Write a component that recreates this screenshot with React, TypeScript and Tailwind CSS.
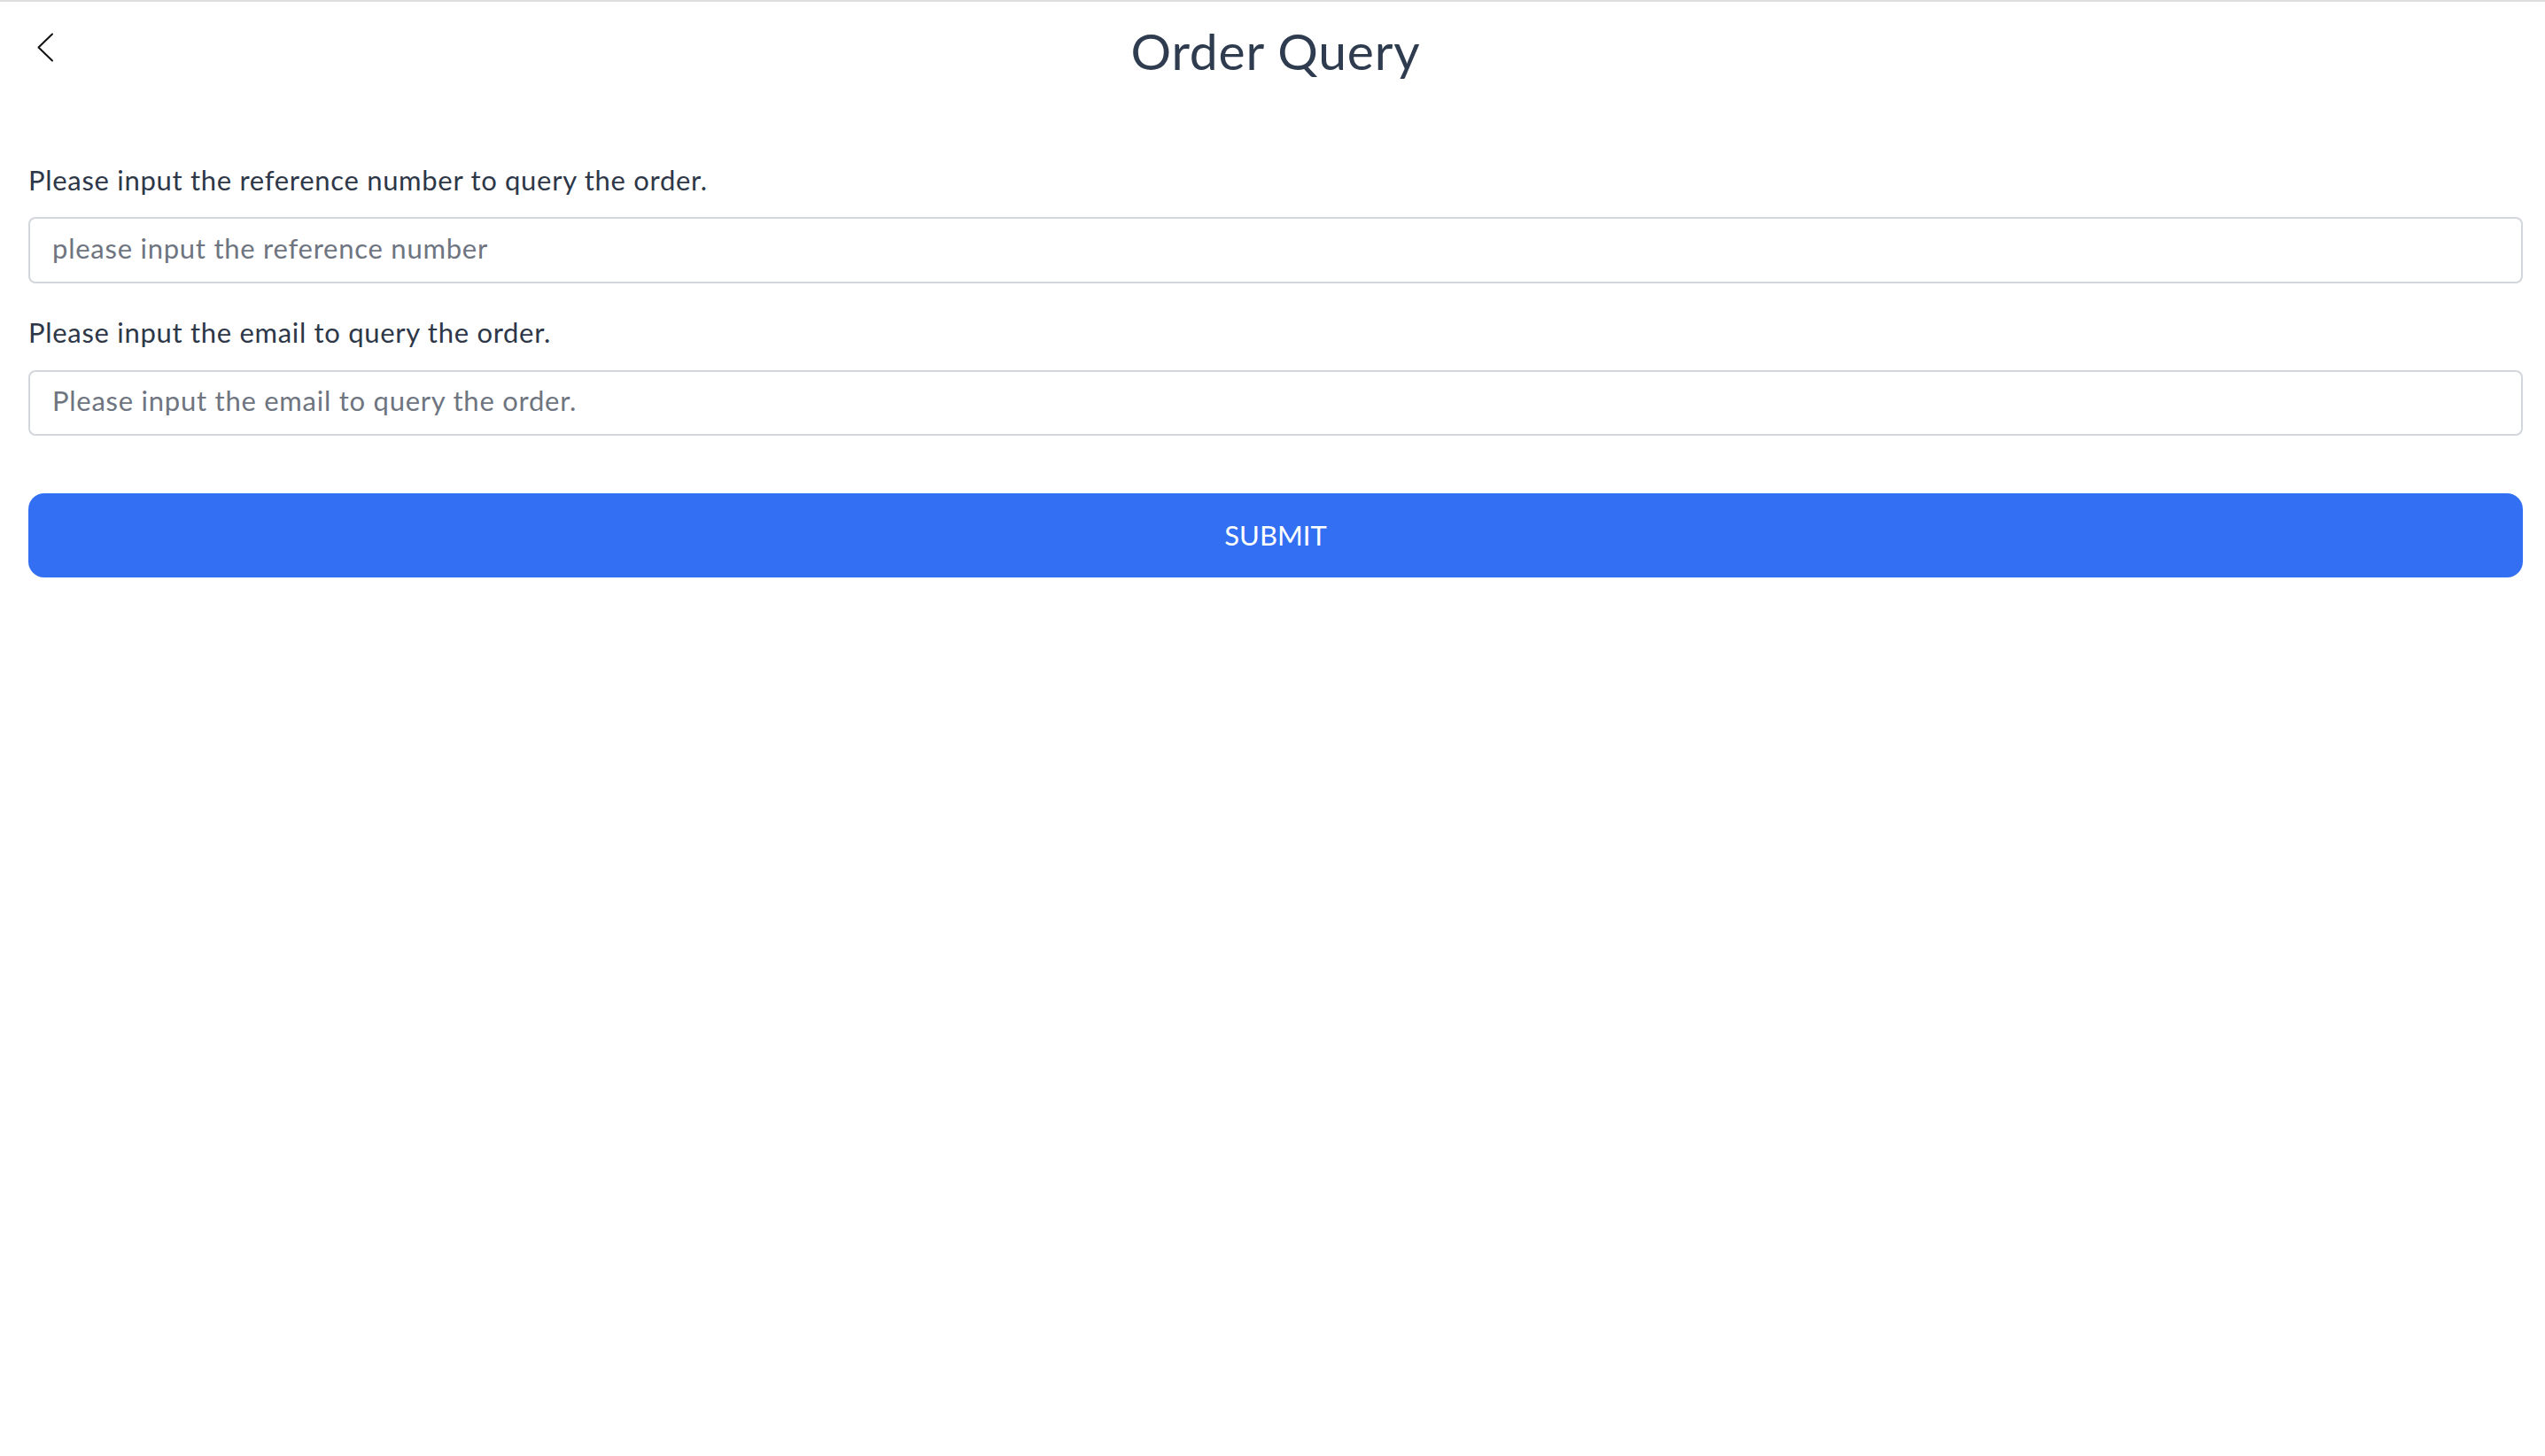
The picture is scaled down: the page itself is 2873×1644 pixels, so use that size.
import React from "react";

export default function App() {
  return (
    <div
      className="min-h-screen bg-white border-t-2 border-[#dedede]"
      style={{ fontFamily: "Lato, 'Open Sans', sans-serif" }}
    >
      <div className="pl-[32px] pr-[25px]">
        <header className="grid grid-cols-[1fr_auto_1fr] items-start pt-[21px]">
          <div className="flex">
            <button className="mt-[14px] ml-[9px] w-[20px] h-[33px] flex items-center justify-center">
              <svg width="20" height="33" viewBox="0 0 20 33" fill="none">
                <polyline
                  points="18,1.5 2.5,16.5 18,31.5"
                  stroke="#111"
                  strokeWidth="2"
                  strokeLinecap="round"
                  strokeLinejoin="round"
                />
              </svg>
            </button>
          </div>
          <h1 className="text-[57px] leading-[68px] tracking-[0.8px] text-[#2f3c4f] font-normal">Order Query</h1>
          <div />
        </header>

        <form className="mt-[94px] flex flex-col" onSubmit={(e) => e.preventDefault()}>
          <label className="text-[31px] leading-[36px] tracking-[0.7px] text-[#2d3748] mb-[24px]">
            Please input the reference number to query the order.
          </label>
          <input
            type="text"
            placeholder="please input the reference number"
            className="h-[75px] w-full border-2 border-[#d3d6db] rounded-[8px] px-[25px] pt-0 pb-[6px] text-[31px] tracking-[0.75px] text-[#2d3748] placeholder:text-[#6e7580] outline-none"
          />
          <label className="mt-[37px] text-[31px] leading-[36px] tracking-[0.7px] text-[#2d3748] mb-[25px]">
            Please input the email to query the order.
          </label>
          <input
            type="email"
            placeholder="Please input the email to query the order."
            className="h-[74px] w-full border-2 border-[#d3d6db] rounded-[8px] px-[25px] pt-0 pb-[6px] text-[31px] tracking-[0.75px] text-[#2d3748] placeholder:text-[#6e7580] outline-none"
          />
          <button
            type="submit"
            className="mt-[65px] h-[95px] w-full rounded-[18px] bg-[#336ff3] text-white text-[31px] flex items-center justify-center"
          >
            SUBMIT
          </button>
        </form>
      </div>
    </div>
  );
}
